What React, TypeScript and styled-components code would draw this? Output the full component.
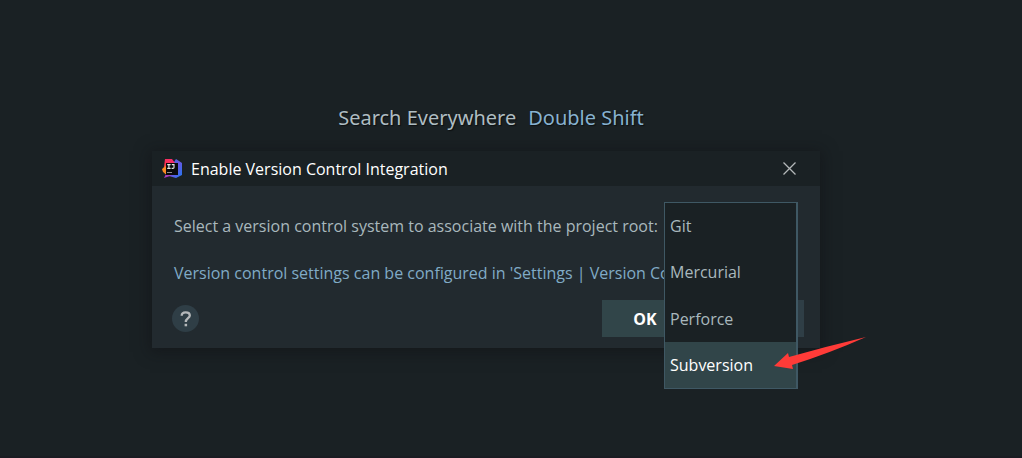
import React, { useState } from "react";
import styled, { createGlobalStyle } from "styled-components";

const GlobalStyle = createGlobalStyle`
  * { box-sizing: border-box; }
  body {
    margin: 0;
    background: #1a2124;
    font-family: "Open Sans", "Noto Sans", sans-serif;
    font-size: 16px;
    line-height: 24px;
    color: #a9b8bd;
  }
  button { font: inherit; color: inherit; border: 0; padding: 0; cursor: pointer; }
`;

const Page = styled.main`
  min-height: 100vh;
  display: flex;
  flex-direction: column;
  align-items: center;
  padding: 102px 50px 64px 0;
  border-bottom: 2px solid #1a1c22;
`;

const Hint = styled.p`
  display: flex;
  gap: 12px;
  margin: 0 0 17px;
  padding-left: 10px;
  font-family: "Noto Sans", sans-serif;
  font-size: 20px;
  line-height: 32px;
  color: #afbdc2;
  text-shadow: 1px 1px 1px #0c0f11;
`;

const Shortcut = styled.kbd`
  font: inherit;
  color: #87b2d0;
`;

const Dialog = styled.section`
  width: 100%;
  max-width: 668px;
  background: #222a2f;
  box-shadow: 0 2px 14px 2px rgba(16, 16, 20, 0.5);
`;

const TitleBar = styled.header`
  display: flex;
  align-items: center;
  height: 35px;
  padding: 0 24px 0 10px;
  gap: 9px;
  background: #1a2124;
`;

const Title = styled.h1`
  flex: 1;
  margin: 0;
  font-size: 16px;
  font-weight: 400;
  line-height: 24px;
  color: #ffffff;
`;

const CloseButton = styled.button`
  display: flex;
  background: none;
`;

const Body = styled.div`
  padding: 16px 16px 11px 22px;
`;

const Field = styled.div`
  display: flex;
  align-items: center;
  justify-content: space-between;
  height: 48px;
  padding-right: 6px;
`;

const ComboBox = styled.div`
  position: relative;
  width: 134px;
  height: 48px;
`;

const ComboButton = styled.button`
  width: 100%;
  height: 100%;
  background: #1a2124;
`;

const Menu = styled.ul`
  position: absolute;
  top: 0;
  left: 0;
  z-index: 1;
  display: grid;
  grid-auto-rows: 1fr;
  width: 100%;
  height: 187px;
  margin: 0;
  padding: 0;
  list-style: none;
  background: #1a2124;
  border: 1px solid #3f5864;
  border-right-width: 2px;
`;

const MenuItem = styled.button<{ $active: boolean }>`
  display: block;
  width: 100%;
  height: 100%;
  padding: 0 5px;
  text-align: left;
  color: ${(p) => (p.$active ? "#ffffff" : "#a9b8bd")};
  background: ${(p) => (p.$active ? "#314549" : "transparent")};
`;

const Note = styled.p`
  margin: 11px 0 15px;
  white-space: nowrap;
  color: #80abc6;
`;

const Actions = styled.footer`
  display: flex;
  align-items: center;
  gap: 15px;
`;

const HelpButton = styled.button`
  display: flex;
  width: 27px;
  height: 27px;
  margin: 0 auto 0 -2px;
  border-radius: 50%;
  background: #2f3e46;
`;

const ActionButton = styled.button<{ $primary?: boolean }>`
  width: ${(p) => (p.$primary ? "86px" : "101px")};
  height: 37px;
  font-weight: ${(p) => (p.$primary ? 700 : 400)};
  color: ${(p) => (p.$primary ? "#ffffff" : "#a9b8bd")};
  background: ${(p) => (p.$primary ? "#314549" : "#2f3e46")};
`;

const Pointer = styled.svg`
  position: absolute;
  top: 135px;
  left: 110px;
  z-index: 2;
  pointer-events: none;
`;

const Logo = () => (
  <svg width="20" height="20" viewBox="0 0 20 20" aria-hidden="true">
    <defs>
      <linearGradient id="warm" x1="0" y1="1" x2="1" y2="0">
        <stop offset="0" stopColor="#fb9a1c" />
        <stop offset="0.4" stopColor="#f5314f" />
        <stop offset="1" stopColor="#f72b75" />
      </linearGradient>
      <linearGradient id="cool" x1="0" y1="0" x2="1" y2="1">
        <stop offset="0" stopColor="#2f6fe8" />
        <stop offset="0.5" stopColor="#6a55e0" />
        <stop offset="1" stopColor="#1f7cf3" />
      </linearGradient>
    </defs>
    <path d="M12 3 14 0 20 4V16L14 19 7 17Z" fill="url(#cool)" />
    <path d="M3 0H10L13 4 8 15 3 15 1 10 2 8Z" fill="url(#warm)" />
    <path d="M0 10 4 7V15L1 13Z" fill="#f98a22" />
    <path d="M4 15H11L8 17 2 19Z" fill="#a63cc0" />
    <rect x="4" y="4" width="12" height="12" fill="#0b0a0c" />
    <path d="M5.2 5.6H8.6M6.9 5.6V9.4M5.2 9.4H8.6M9.8 5.6H12V8.5Q12 9.4 10.9 9.4H9.6" fill="none" stroke="#e8e8e8" strokeWidth="1.1" />
    <path d="M5 13.5H10" stroke="#8e8e90" strokeWidth="1" />
  </svg>
);

const systems = ["Git", "Mercurial", "Perforce", "Subversion"];

export default function App() {
  const [selected, setSelected] = useState("Subversion");

  return (
    <>
      <GlobalStyle />
      <Page>
        <Hint>
          Search Everywhere <Shortcut>Double Shift</Shortcut>
        </Hint>
        <Dialog role="dialog" aria-labelledby="dialog-title">
          <TitleBar>
            <Logo />
            <Title id="dialog-title">Enable Version Control Integration</Title>
            <CloseButton aria-label="Close">
              <svg width="13" height="13" viewBox="0 0 13 13" aria-hidden="true">
                <path d="M.5.5 12.5 12.5M12.5.5.5 12.5" stroke="#b4b8ba" strokeWidth="1.3" />
              </svg>
            </CloseButton>
          </TitleBar>
          <Body>
            <Field>
              <span id="vcs-label">Select a version control system to associate with the project root:</span>
              <ComboBox>
                <ComboButton aria-haspopup="listbox" aria-expanded="true" aria-labelledby="vcs-label" />
                <Menu role="listbox" aria-labelledby="vcs-label">
                  {systems.map((name) => (
                    <li key={name} role="presentation">
                      <MenuItem
                        role="option"
                        aria-selected={name === selected}
                        $active={name === selected}
                        onClick={() => setSelected(name)}
                      >
                        {name}
                      </MenuItem>
                    </li>
                  ))}
                </Menu>
                <Pointer width="92" height="34" viewBox="0 0 92 34" aria-hidden="true">
                  <path d="M0 29 14 16 15 20Q54 9 92 0 56 16 18 28L19 32Z" fill="#ff3b38" />
                </Pointer>
              </ComboBox>
            </Field>
            <Note>Version control settings can be configured in 'Settings | Version Control'</Note>
            <Actions>
              <HelpButton aria-label="Help">
                <svg width="27" height="27" viewBox="0 0 27 27" aria-hidden="true">
                  <path
                    d="M9.7 10.8C9.7 8.5 11.3 7.4 13.7 7.4S17.8 8.6 17.8 10.6C17.8 13.2 13.8 13.4 13.8 17"
                    fill="none"
                    stroke="#b5b8ba"
                    strokeWidth="2.3"
                  />
                  <rect x="12.6" y="18.8" width="2.5" height="2.5" fill="#b5b8ba" />
                </svg>
              </HelpButton>
              <ActionButton $primary>OK</ActionButton>
              <ActionButton>Cancel</ActionButton>
            </Actions>
          </Body>
        </Dialog>
      </Page>
    </>
  );
}
